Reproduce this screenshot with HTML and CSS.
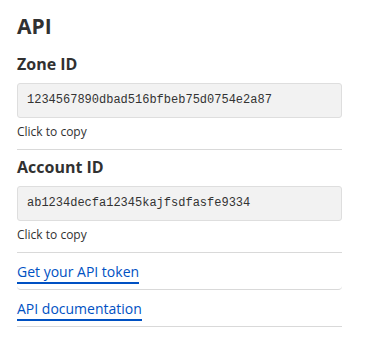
FILE: index.html
```html
<!DOCTYPE html>
<html>
<head>
<meta charset="utf-8">
<link rel="stylesheet" href="styles.css">
</head>
<body>
<section class="panel">
  <h2 class="title">API</h2>
  <div class="field">
    <h3 class="label">Zone ID</h3>
    <div class="code">1234567890dbad516bfbeb75d0754e2a87</div>
    <div class="hint">Click to copy</div>
  </div>
  <div class="field">
    <h3 class="label">Account ID</h3>
    <div class="code">ab1234decfa12345kajfsdfasfe9334</div>
    <div class="hint">Click to copy</div>
  </div>
  <div class="linkrow rounded"><a href="#" class="link">Get your API token</a></div>
  <div class="linkrow"><a href="#" class="link">API documentation</a></div>
</section>
</body>
</html>
```
FILE: styles.css
```css
html, body { margin: 0; padding: 0; background: #fff; }
body {
  font-family: "Open Sans", "Noto Sans", sans-serif;
  color: #313131;
}
.panel {
  width: 325px;
  padding: 14px 0 0 17px;
}
.title {
  margin: 0;
  font-size: 21px;
  line-height: 24px;
  font-weight: 700;
}
.field {
  border-bottom: 1px solid #d9d9d9;
  padding: 0 0 9px;
}
.field:first-of-type { margin-top: 16px; }
.field + .field { padding-top: 7px; }
.label {
  margin: 0 0 9px;
  font-size: 16px;
  line-height: 20px;
  font-weight: 700;
}
.code {
  height: 35px;
  box-sizing: border-box;
  background: #f2f2f2;
  border: 1px solid #dedede;
  border-radius: 3px;
  font-family: "Liberation Mono", monospace;
  font-size: 12px;
  line-height: 33px;
  padding: 0 9px;
  color: #333;
}
.hint {
  margin-top: 6px;
  font-size: 12px;
  line-height: 16px;
}
.linkrow {
  border-bottom: 1px solid #d9d9d9;
  padding: 10px 0 8px;
  font-size: 14px;
  line-height: 18px;
}
.rounded { border-radius: 0 0 4px 4px; }
.link {
  color: #0051c3;
  text-decoration: none;
  border-bottom: 2px solid #0051c3;
  padding-bottom: 1px;
}
```
